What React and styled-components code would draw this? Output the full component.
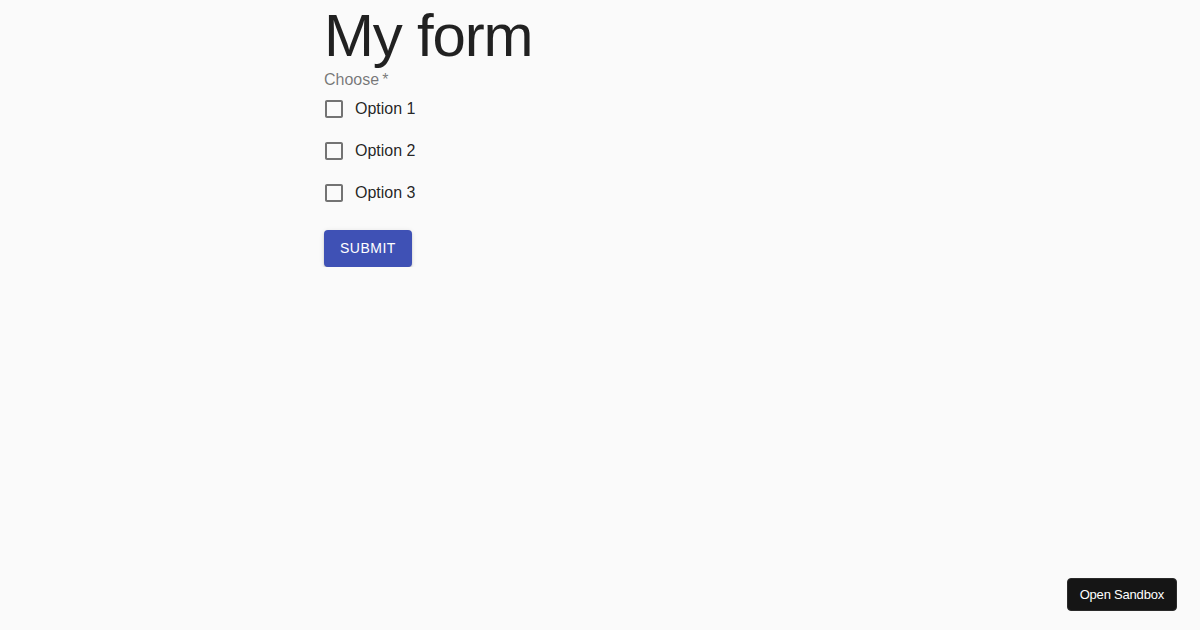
import styled, { createGlobalStyle } from "styled-components";

const GlobalStyle = createGlobalStyle`
  html, body {
    margin: 0;
    padding: 0;
    background: #fafafa;
    font-family: "Liberation Sans", Helvetica, Arial, sans-serif;
  }
`;

const options = ["Option 1", "Option 2", "Option 3"];

function BoxIcon() {
  return (
    <svg viewBox="0 0 24 24" width="24" height="24" fill="currentColor">
      <path d="M19 5v14H5V5h14m0-2H5c-1.11 0-2 .9-2 2v14c0 1.1.89 2 2 2h14c1.11 0 2-.9 2-2V5c0-1.1-.89-2-2-2z" />
    </svg>
  );
}

export default function App() {
  return (
    <>
      <GlobalStyle />
      <Container>
        <Title>My form</Title>
        <form onSubmit={(e) => e.preventDefault()}>
          <FieldSet>
            <Legend>
              Choose<Asterisk>*</Asterisk>
            </Legend>
            <Group>
              {options.map((opt) => (
                <OptionRow key={opt}>
                  <CheckWrap>
                    <HiddenInput type="checkbox" />
                    <BoxIcon />
                  </CheckWrap>
                  <OptionText>{opt}</OptionText>
                </OptionRow>
              ))}
            </Group>
          </FieldSet>
          <SubmitButton type="submit">Submit</SubmitButton>
        </form>
      </Container>
      <SandboxButton>Open Sandbox</SandboxButton>
    </>
  );
}

const Container = styled.div`
  max-width: 600px;
  margin: 0 auto;
  padding: 0 24px;
  box-sizing: border-box;
`;

const Title = styled.h2`
  margin: 0;
  font-size: 60px;
  font-weight: 300;
  line-height: 1.2;
  letter-spacing: -1.2px;
  color: rgba(0, 0, 0, 0.87);
`;

const FieldSet = styled.fieldset`
  margin: 0;
  padding: 0;
  border: 0;
  min-width: 0;
  display: flex;
  flex-direction: column;
`;

const Legend = styled.legend`
  padding: 0;
  font-size: 16px;
  line-height: 1;
  color: rgba(0, 0, 0, 0.54);
  margin-top: -1px;
`;

const Asterisk = styled.span`
  margin-left: 3px;
`;

const Group = styled.div`
  display: flex;
  flex-direction: column;
`;

const OptionRow = styled.label`
  display: inline-flex;
  align-items: center;
  margin-left: -11px;
  margin-right: 16px;
  cursor: pointer;
  align-self: flex-start;
`;

const CheckWrap = styled.span`
  position: relative;
  display: inline-flex;
  padding: 9px;
  color: rgba(0, 0, 0, 0.54);
  border-radius: 50%;
`;

const HiddenInput = styled.input`
  position: absolute;
  inset: 0;
  width: 100%;
  height: 100%;
  margin: 0;
  opacity: 0;
  cursor: inherit;
`;

const OptionText = styled.span`
  font-size: 16px;
  line-height: 1.5;
  color: rgba(0, 0, 0, 0.87);
`;

const SubmitButton = styled.button`
  margin-top: 16px;
  min-width: 64px;
  padding: 6px 16px;
  border: 0;
  border-radius: 4px;
  background: #3f51b5;
  color: #fff;
  font-family: inherit;
  font-size: 14px;
  font-weight: 500;
  line-height: 1.75;
  letter-spacing: 0.5px;
  text-transform: uppercase;
  cursor: pointer;
  box-shadow: 0 3px 1px -2px rgba(0, 0, 0, 0.2), 0 2px 2px 0 rgba(0, 0, 0, 0.14),
    0 1px 5px 0 rgba(0, 0, 0, 0.12);
`;

const SandboxButton = styled.a`
  position: fixed;
  right: 23px;
  bottom: 19px;
  height: 33px;
  padding: 0 12px;
  display: flex;
  align-items: center;
  box-sizing: border-box;
  background: #151515;
  color: #fff;
  border: 1px solid #2a2a2a;
  border-radius: 4px;
  font-size: 13px;
  letter-spacing: -0.2px;
  cursor: pointer;
`;
